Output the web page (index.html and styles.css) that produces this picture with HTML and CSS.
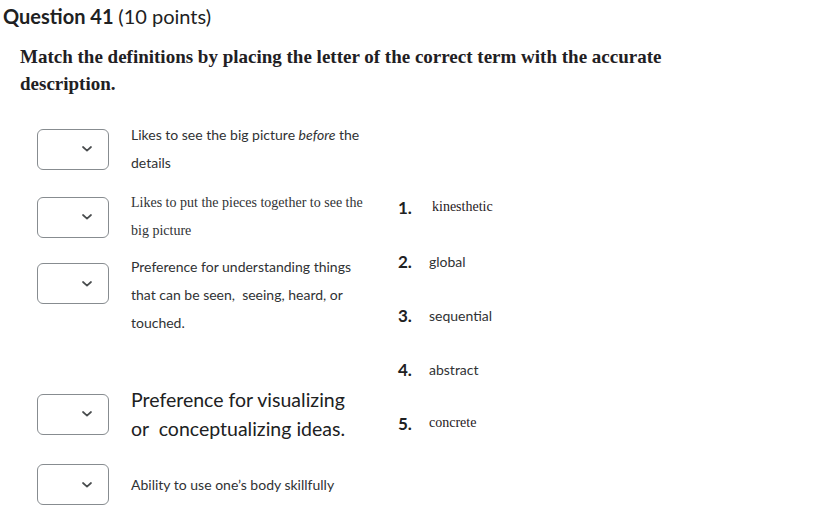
FILE: index.html
```html
<!DOCTYPE html>
<html lang="en">
<head>
    <meta charset="UTF-8">
    <meta name="viewport" content="width=device-width, initial-scale=1.0">
    <title>Question 41</title>
    <link rel="stylesheet" href="styles.css">
</head>
<body>
    <div class="question">
        <h2 class="q-title">Question 41 <span class="q-points">(10 points)</span></h2>
        <div class="q-body">
            <p class="prompt">Match the definitions by placing the letter of the correct term with the accurate description.</p>

            <div class="matching">
                <div class="defs">
                    <div class="row">
                        <div class="pick"><svg width="10" height="6" viewBox="0 0 10 6"><path d="M1 1l4 3.6L9 1" fill="none" stroke="#494c4e" stroke-width="1.7" stroke-linecap="round" stroke-linejoin="round"/></svg></div>
                        <div class="def">Likes to see the big picture <em>before</em> the details</div>
                    </div>
                    <div class="row row-near">
                        <div class="pick"><svg width="10" height="6" viewBox="0 0 10 6"><path d="M1 1l4 3.6L9 1" fill="none" stroke="#494c4e" stroke-width="1.7" stroke-linecap="round" stroke-linejoin="round"/></svg></div>
                        <div class="def serif">Likes to put the pieces together to see the big picture</div>
                    </div>
                    <div class="row row-top">
                        <div class="pick"><svg width="10" height="6" viewBox="0 0 10 6"><path d="M1 1l4 3.6L9 1" fill="none" stroke="#494c4e" stroke-width="1.7" stroke-linecap="round" stroke-linejoin="round"/></svg></div>
                        <div class="def">Preference for understanding things that can be seen,&nbsp; seeing, heard, or touched.</div>
                    </div>
                    <div class="row row-far">
                        <div class="pick"><svg width="10" height="6" viewBox="0 0 10 6"><path d="M1 1l4 3.6L9 1" fill="none" stroke="#494c4e" stroke-width="1.7" stroke-linecap="round" stroke-linejoin="round"/></svg></div>
                        <div class="def big">Preference for visualizing or&nbsp; conceptualizing ideas.</div>
                    </div>
                    <div class="row row-mid">
                        <div class="pick"><svg width="10" height="6" viewBox="0 0 10 6"><path d="M1 1l4 3.6L9 1" fill="none" stroke="#494c4e" stroke-width="1.7" stroke-linecap="round" stroke-linejoin="round"/></svg></div>
                        <div class="def">Ability to use one’s body skillfully</div>
                    </div>
                </div>

                <ol class="choices">
                    <li><span class="num">1.</span><span class="term serif indent">kinesthetic</span></li>
                    <li><span class="num">2.</span><span class="term">global</span></li>
                    <li><span class="num">3.</span><span class="term">sequential</span></li>
                    <li><span class="num">4.</span><span class="term">abstract</span></li>
                    <li><span class="num">5.</span><span class="term serif">concrete</span></li>
                </ol>
            </div>
        </div>
    </div>
</body>
</html>
```

FILE: styles.css
```css
body {
    margin: 0;
    background: #fff;
    font-family: Lato, "Open Sans", sans-serif;
    color: #202122;
}
.question {
    padding: 4px 0 0 3px;
}
.q-title {
    margin: 0;
    font-size: 20px;
    font-weight: 700;
    line-height: 24px;
}
.q-points {
    font-weight: 400;
}
.q-body {
    padding-left: 17px;
}
.prompt {
    width: 700px;
    margin: 15px 0 0;
    font-family: "Liberation Serif", serif;
    font-size: 19px;
    font-weight: 700;
    line-height: 27px;
    color: #1f2023;
}
.matching {
    display: flex;
    align-items: flex-start;
    margin-top: 24px;
}
.defs {
    padding-left: 17px;
}
.row {
    display: flex;
    align-items: center;
    gap: 22px;
}
.row-near {
    margin-top: 12px;
}
.row-top {
    margin-top: 8px;
    align-items: flex-start;
}
.row-top .pick {
    margin-top: 10px;
}
.row-far {
    margin-top: 48px;
}
.row-mid {
    margin-top: 21px;
}
.pick {
    flex: none;
    box-sizing: border-box;
    width: 72px;
    height: 41px;
    border: 1px solid #878c90;
    border-radius: 6px;
    display: flex;
    align-items: center;
    justify-content: flex-end;
    padding-right: 16px;
}
.pick svg {
    display: block;
}
.def {
    width: 234px;
    font-size: 14px;
    line-height: 28px;
    color: #303234;
}
.def.big {
    font-size: 19.5px;
    line-height: 29px;
    color: #202122;
}
.serif {
    font-family: "Liberation Serif", serif;
}
.choices {
    list-style: none;
    margin: 0 0 0 33px;
    padding: 59px 0 0;
}
.choices li {
    display: flex;
    align-items: center;
    height: 54px;
}
.num {
    width: 31px;
    font-size: 17px;
    font-weight: 700;
}
.term {
    font-size: 14px;
    color: #303234;
}
.term.serif {
    color: #1f2023;
}
.term.indent {
    padding-left: 3px;
}
```
